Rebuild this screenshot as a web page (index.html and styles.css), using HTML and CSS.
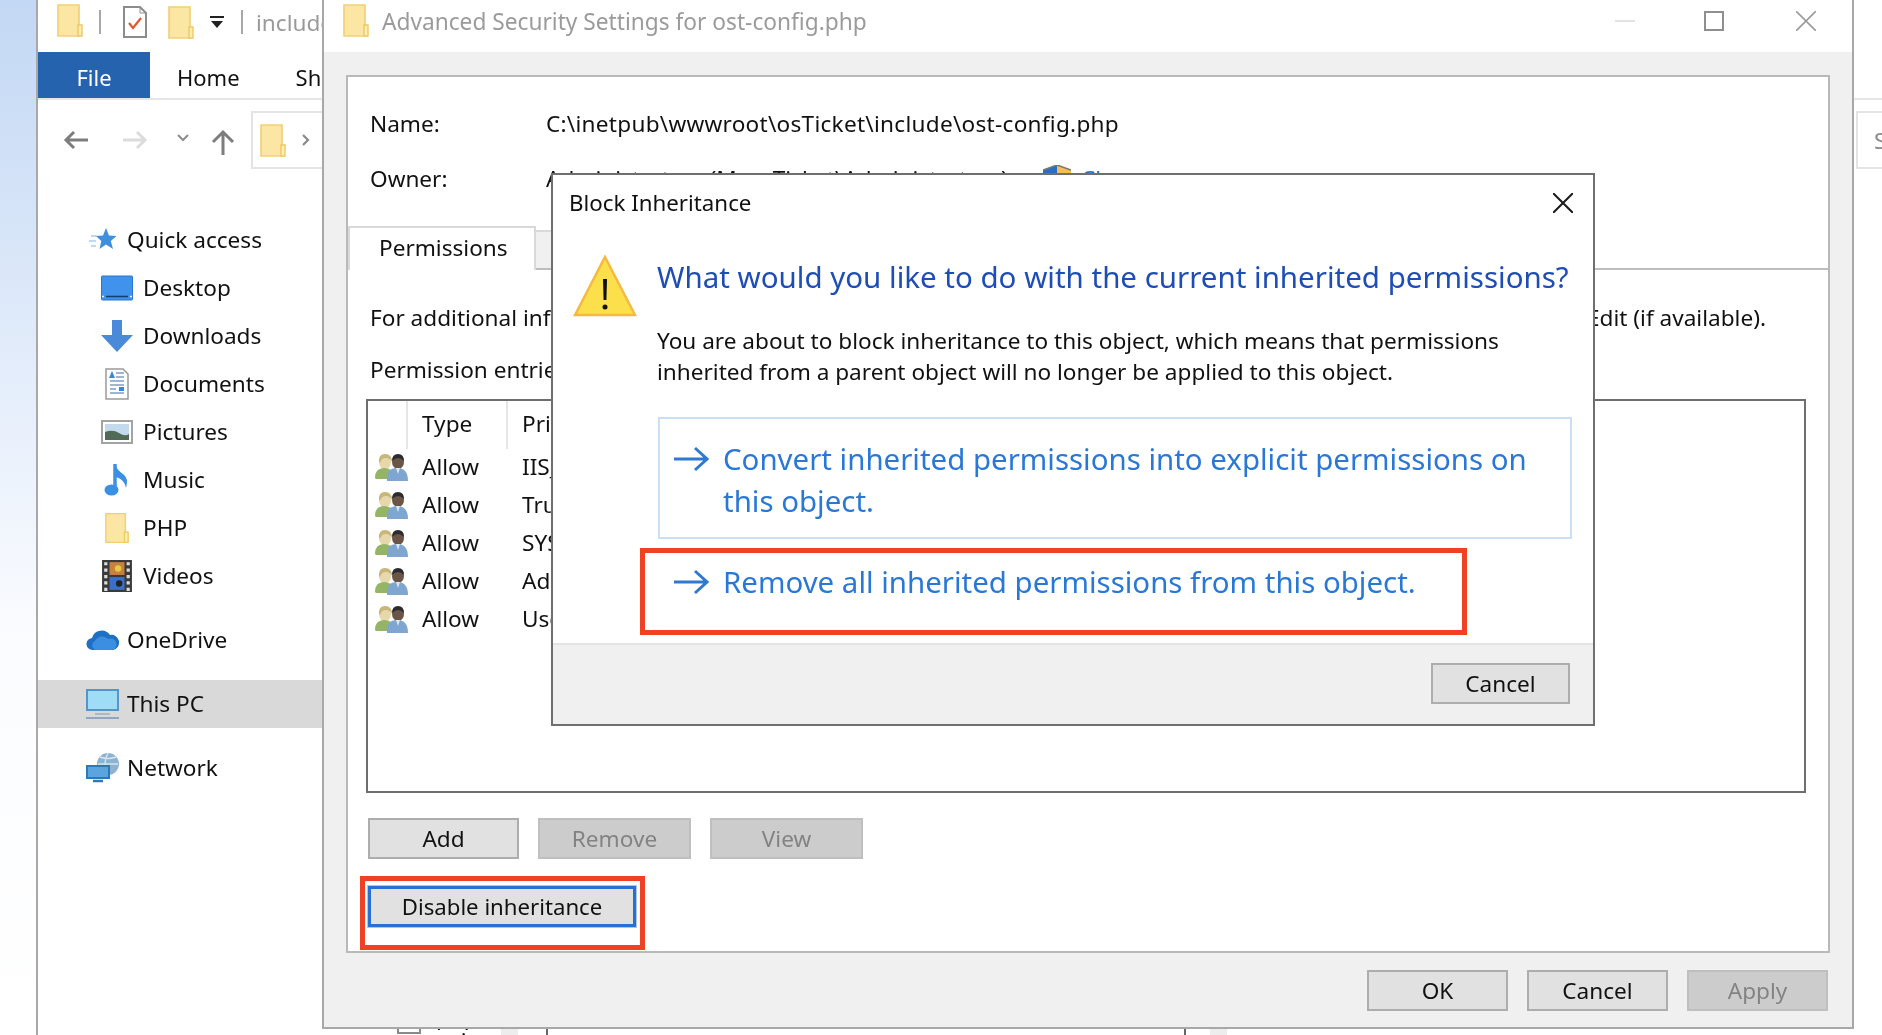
FILE: index.html
```html
<!DOCTYPE html>
<html lang="en">
<head>
<meta charset="utf-8">
<title>Block Inheritance</title>
<link rel="stylesheet" href="styles.css">
</head>
<body>
<svg class="sprite" xmlns="http://www.w3.org/2000/svg">
  <symbol id="folder" viewBox="0 0 26 33"><path d="M1 1h21v31H1z" fill="#fbe6a4" stroke="#f2cf75" stroke-width="1.6"/><path d="M21 21h4v11h-4z" fill="#fdeeb8" stroke="#f0c860" stroke-width="1.4"/></symbol>
  <symbol id="people" viewBox="0 0 33 27"><ellipse cx="10" cy="8" rx="6" ry="7.500" fill="#e6d8aa"/><path d="M4 9q-1-9 6-9t7 8q-2-4-6-4t-5 3z" fill="#c8b77c"/><path d="M0 24q0-10 9-10 8 0 10 7v4H1z" fill="#94b565"/><ellipse cx="23" cy="8" rx="6" ry="7" fill="#6a5546"/><path d="M17 7q0-7 6-7t6 7q-3-3-6-3t-6 3z" fill="#2b2b30"/><path d="M12 27q-1-13 10-13 11 0 11 13z" fill="#7fa6d0"/><path d="M21 14l2 6 2-6z" fill="#dbe8f4"/></symbol>
  <symbol id="arrow" viewBox="0 0 36 26"><path d="M1 13h33M22 2l12 11-12 11" fill="none" stroke="#2f79d2" stroke-width="3"/></symbol>
</svg>
<main class="desktop">
  <section class="explorer">
    <header class="qat">
      <svg class="ic-folder ic-folder-1"><use href="#folder"/></svg>
      <span class="qat-sep"></span>
      <svg class="ic-check" viewBox="0 0 24 32"><path d="M1 1h16l6 6v24H1z" fill="#fff" stroke="#8c8c8c" stroke-width="2"/><path d="M17 1v6h6" fill="none" stroke="#8c8c8c"/><path d="M6 17l4 5 8-10" fill="none" stroke="#e0582d" stroke-width="2.2"/></svg>
      <svg class="ic-folder ic-folder-2"><use href="#folder"/></svg>
      <svg class="ic-drop" viewBox="0 0 14 14"><path d="M0 1h14v2H0zM1 6h12l-6 7z" fill="#222"/></svg>
      <span class="qat-sep qat-sep-2"></span>
      <span class="qat-path">include</span>
    </header>
    <nav class="ribbon">
      <span class="rib-file">File</span>
      <span class="rib-tab">Home</span>
      <span class="rib-tab rib-share">Share</span>
    </nav>
    <div class="addrbar">
      <svg class="nav-back" viewBox="0 0 26 20"><path d="M25 10H3M11 2l-8 8 8 8" fill="none" stroke="#7d7d7d" stroke-width="3"/></svg>
      <svg class="nav-fwd" viewBox="0 0 26 20"><path d="M1 10h22M15 2l8 8-8 8" fill="none" stroke="#dcdcdc" stroke-width="3"/></svg>
      <svg class="nav-chev" viewBox="0 0 12 8"><path d="M1 1l5 5 5-5" fill="none" stroke="#8d8d8d" stroke-width="2"/></svg>
      <svg class="nav-up" viewBox="0 0 24 26"><path d="M12 26V3M2 13L12 3l10 10" fill="none" stroke="#7d7d7d" stroke-width="3"/></svg>
      <div class="addr">
        <svg class="ic-folder"><use href="#folder"/></svg>
        <svg class="addr-chev" viewBox="0 0 8 12"><path d="M1 1l5 5-5 5" fill="none" stroke="#8a8a8a" stroke-width="2.2"/></svg>
      </div>
      <div class="search"><span>S</span></div>
    </div>
    <div class="ex-body">
      <ul class="navpane">
        <li class="nav-item nav-top">
          <svg class="nic" viewBox="-3 -4 33 32"><path d="M17 0l3 7.500 7.500 .5-5.700 5 2.200 8-7-4.500-6.500 4.500 1.800-8-5.300-5 7-.5z" fill="#3f8fdc"/><path d="M2 8h6M0 13h7M2 18h5" stroke="#a9cdf0" stroke-width="1.500"/></svg>
          Quick access
        </li>
        <li class="nav-item nav-sub">
          <svg class="nic" viewBox="0 0 32 25"><rect x="0.500" y="0.500" width="31" height="24" rx="1" fill="#3f93ec" stroke="#2a76c8"/><path d="M5 21h22" stroke="#123e74" stroke-width="1.500"/><path d="M1 21h2M29 21h2" stroke="#dff" stroke-width="1.500"/></svg>
          Desktop
        </li>
        <li class="nav-item nav-sub">
          <svg class="nic" viewBox="0 0 32 32"><path d="M11 0h10v15h11L16 32 0 15h11z" fill="#4a8ad8"/></svg>
          Downloads
        </li>
        <li class="nav-item nav-sub">
          <svg class="nic" viewBox="0 0 32 32"><path d="M5 1h17l5 5v25H5z" fill="#fff" stroke="#9a9a9a" stroke-width="1.500"/><path d="M15 5h8M15 9h8M9 13h14M9 17h14M9 21h6M9 25h14" stroke="#7f9fc4" stroke-width="1.500"/><path d="M11 3l3 7H8zM18 19h5v4h-5z" fill="#3b86d6"/></svg>
          Documents
        </li>
        <li class="nav-item nav-sub">
          <svg class="nic" viewBox="0 0 32 24"><rect x="1" y="1" width="30" height="22" fill="#fff" stroke="#a3a3a3" stroke-width="2"/><rect x="4" y="4" width="24" height="16" fill="#c2d9ee"/><path d="M4 12q8-3 14 1t10 1v6H4z" fill="#4f6b57"/></svg>
          Pictures
        </li>
        <li class="nav-item nav-sub">
          <svg class="nic" viewBox="0 0 32 32"><path d="M14 0v25" stroke="#3a90e2" stroke-width="3.500"/><path d="M14 0q2 6 8 10t3 14q-1-8-10-11z" fill="#3a90e2"/><ellipse cx="10.500" cy="26" rx="7" ry="5.500" fill="#3a90e2"/></svg>
          Music
        </li>
        <li class="nav-item nav-sub">
          <svg class="nic nic-folder"><use href="#folder"/></svg>
          PHP
        </li>
        <li class="nav-item nav-sub">
          <svg class="nic" viewBox="0 0 28 30"><rect width="28" height="30" fill="#3a3a3a"/><path d="M2 2h3v3H2zM2 8h3v3H2zM2 14h3v3H2zM2 20h3v3H2zM2 26h3v3H2zM23 2h3v3h-3zM23 8h3v3h-3zM23 14h3v3h-3zM23 20h3v3h-3zM23 26h3v3h-3z" fill="#ddd"/><rect x="7" y="2" width="14" height="12" fill="#c9813c"/><rect x="7" y="16" width="14" height="12" fill="#3c6fc9"/><circle cx="15" cy="8" r="3" fill="#e8c84a"/><circle cx="16" cy="22" r="3" fill="#222"/></svg>
          Videos
        </li>
        <li class="nav-item nav-top nav-gap">
          <svg class="nic" viewBox="0 0 33 24"><path d="M7 22a6 6 0 0 1-1-12 10 10 0 0 1 18-3 7 7 0 0 1 3 15z" fill="#1f6fc4"/><path d="M9 22a5 5 0 0 1 0-9 8 8 0 0 1 13-2 6 6 0 0 1 5 11z" fill="#3b8ee0"/></svg>
          OneDrive
        </li>
        <li class="nav-item nav-top nav-gap nav-selected">
          <svg class="nic" viewBox="0 0 33 30"><rect x="1" y="1" width="31" height="20" fill="#9fdcf6" stroke="#5795c8" stroke-width="2"/><path d="M9 25h15" stroke="#aab9c6" stroke-width="2"/><path d="M0 29h33" stroke="#8fa8c0" stroke-width="2"/></svg>
          This PC
        </li>
        <li class="nav-item nav-top nav-gap">
          <svg class="nic" viewBox="0 0 33 30"><circle cx="22" cy="11" r="11" fill="#8db3d0"/><path d="M14 4q8 3 16 0M12 11h20M22 0q-6 11 0 22" stroke="#d5e5f0" stroke-width="1.500" fill="none"/><rect x="1" y="13" width="22" height="12" fill="#5ba5de" stroke="#2f78b8" stroke-width="2"/><path d="M7 28h10" stroke="#2f78b8" stroke-width="2.500"/></svg>
          Network
        </li>
      </ul>
      <div class="filelist">
        <div class="file-row">
          <span class="file-check"></span>
          <span class="file-name">php-cgi</span>
          <span class="file-thumb"></span>
          <span class="file-rule"></span>
          <span class="file-fill"></span>
          <span class="file-rule"></span>
          <span class="file-thumb file-thumb-2"></span>
          <span class="file-type">PHP File</span>
        </div>
      </div>
    </div>
  </section>

  <section class="security">
    <header class="sec-title">
      <svg class="ic-folder"><use href="#folder"/></svg>
      <h1 class="sec-heading">Advanced Security Settings for ost-config.php</h1>
      <svg class="win-min" viewBox="0 0 20 2"><path d="M0 1h20" stroke="#e2e2e2" stroke-width="2"/></svg>
      <svg class="win-max" viewBox="0 0 20 20"><rect x="1" y="1" width="18" height="18" fill="none" stroke="#8f8f8f" stroke-width="2"/></svg>
      <svg class="win-close" viewBox="0 0 20 20"><path d="M0 0l20 20M20 0L0 20" stroke="#9a9a9a" stroke-width="1.600"/></svg>
    </header>
    <div class="panel">
      <dl class="info">
        <dt>Name:</dt>
        <dd class="path">C:\inetpub\wwwroot\osTicket\include\ost-config.php</dd>
        <dt>Owner:</dt>
        <dd class="owner">
          <span class="owner-name">Administrators (MyosTicket\Administrators)</span>
          <svg class="shield" viewBox="0 0 28 32"><path d="M14 0l14 5v12q0 10-14 15Q0 27 0 17V5z" fill="#f2c14e"/><path d="M14 0L0 5v12h14z" fill="#2b6fc4"/><path d="M14 17v15q14-5 14-15z" fill="#2b6fc4"/><path d="M14 0L0 5M14 0l14 5" stroke="#777" stroke-width="1.500"/></svg>
          <span class="change">Change</span>
        </dd>
      </dl>
      <div class="tabs">
        <span class="tab tab-on">Permissions</span>
        <span class="tab">Auditing</span>
      </div>
      <div class="perm">
        <p class="perm-note"><span class="note-left">For additional information, double-click a permission entry.</span><span class="note-right">To modify a permission entry, select the entry and click Edit (if available).</span></p>
        <p class="perm-label">Permission entries:</p>
        <div class="list">
          <div class="list-head">
            <span class="col-icon"></span>
            <span class="col-type">Type</span>
            <span class="col-name">Principal</span>
          </div>
          <div class="list-row"><svg class="ic-people"><use href="#people"/></svg><span class="col-type">Allow</span><span class="col-name">IIS_IUSRS</span></div>
          <div class="list-row"><svg class="ic-people"><use href="#people"/></svg><span class="col-type">Allow</span><span class="col-name">TrustedInstaller</span></div>
          <div class="list-row"><svg class="ic-people"><use href="#people"/></svg><span class="col-type">Allow</span><span class="col-name">SYSTEM</span></div>
          <div class="list-row"><svg class="ic-people"><use href="#people"/></svg><span class="col-type">Allow</span><span class="col-name">Administrators</span></div>
          <div class="list-row"><svg class="ic-people"><use href="#people"/></svg><span class="col-type">Allow</span><span class="col-name">Users</span></div>
        </div>
        <div class="perm-actions">
          <button class="btn btn-add">Add</button>
          <button class="btn btn-small btn-off">Remove</button>
          <button class="btn btn-small btn-off">View</button>
        </div>
        <button class="btn btn-focus">Disable inheritance</button>
      </div>
    </div>
    <footer class="sec-foot">
      <button class="btn btn-foot">OK</button>
      <button class="btn btn-foot">Cancel</button>
      <button class="btn btn-foot btn-off">Apply</button>
    </footer>
  </section>

  <section class="dialog">
    <header class="dlg-title">
      <span>Block Inheritance</span>
      <svg class="dlg-close" viewBox="0 0 20 20"><path d="M0 0l20 20M20 0L0 20" stroke="#1b1b1b" stroke-width="2"/></svg>
    </header>
    <div class="dlg-body">
      <svg class="warn" viewBox="0 0 64 62"><path d="M32 2l30 58H2z" fill="#fbdf4b" stroke="#f6b93f" stroke-width="2.500"/><path d="M30 24h4l-.6 21h-2.800z" fill="#111"/><circle cx="32" cy="52" r="2.500" fill="#111"/></svg>
      <div class="dlg-main">
        <h2 class="dlg-q">What would you like to do with the current inherited permissions?</h2>
        <p class="dlg-text">You are about to block inheritance to this object, which means that permissions inherited from a parent object will no longer be applied to this object.</p>
        <a class="cmd cmd-hover"><svg class="cmd-arrow"><use href="#arrow"/></svg><span>Convert inherited permissions into explicit permissions on this object.</span></a>
        <a class="cmd cmd-plain"><svg class="cmd-arrow"><use href="#arrow"/></svg><span>Remove all inherited permissions from this object.</span></a>
      </div>
    </div>
    <footer class="dlg-foot"><button class="btn btn-foot btn-dlg">Cancel</button></footer>
  </section>

  <div class="callout callout-disable"></div>
  <div class="callout callout-remove"></div>
</main>
</body>
</html>
```

FILE: styles.css
```css
* { box-sizing: border-box; }
html, body { margin: 0; height: 100%; }
body { font-family: "Noto Sans", "Open Sans", sans-serif; font-size: 22.6px; color: #111; overflow: hidden; }
.sprite { width: 0; height: 0; position: absolute; }
ul, dl, dd, dt, p, h1, h2 { margin: 0; padding: 0; font-weight: 400; }
.desktop { position: relative; width: 1882px; height: 1035px; overflow: hidden; background: linear-gradient(180deg, #c3d8f4 0, #dfeafa 320px, #fbfcff 640px, #fff 1035px); }

/* Explorer */
.explorer { position: absolute; left: 36px; top: 0; width: 1846px; height: 1035px; background: #fff; border-left: 2px solid #a8a8a8; display: flex; flex-direction: column; filter: blur(.4px); }
.qat { height: 52px; display: flex; align-items: center; padding: 0 0 8px 19px; flex: none; }
.ic-folder { width: 26px; height: 33px; flex: none; }
.ic-folder-1 { margin-bottom: 4px; }
.qat-sep { width: 2px; height: 24px; background: #a8a8a8; margin-left: 16px; }
.ic-check { width: 24px; height: 32px; margin-left: 22px; }
.ic-folder-2 { margin-left: 21px; }
.ic-drop { width: 14px; height: 14px; margin-left: 16px; }
.qat-sep-2 { margin-left: 17px; }
.qat-path { margin-left: 13px; color: #9a9a9a; }
.ribbon { height: 48px; flex: none; display: flex; border-bottom: 2px solid #e6e6e6; align-items: stretch; font-size: 22px; }
.rib-file { width: 112px; background: #2563ae; color: #fff; display: flex; align-items: center; justify-content: center; padding-top: 3px; }
.rib-tab { margin-left: 27px; display: flex; align-items: center; padding-top: 3px; }
.rib-share { margin-left: 56px; }
.addrbar { height: 70px; flex: none; padding-top: 11px; display: flex; align-items: flex-start; }
.nav-back { width: 26px; height: 20px; margin: 19px 0 0 25px; }
.nav-fwd { width: 26px; height: 20px; margin: 19px 0 0 33px; }
.nav-chev { width: 12px; height: 8px; margin: 23px 0 0 29px; }
.nav-up { width: 24px; height: 26px; margin: 18px 0 0 22px; }
.addr { flex: 1; height: 58px; margin-left: 16px; border: 2px solid #e4e4e4; display: flex; align-items: center; padding-left: 7px; }
.addr-chev { width: 8px; height: 12px; margin-left: 16px; }
.search { width: 26px; height: 58px; margin-left: 30px; flex: none; border: 2px solid #e4e4e4; border-right: 0; display: flex; align-items: center; padding-left: 16px; color: #8a8a8a; overflow: hidden; }
.ex-body { flex: 1; display: flex; min-height: 0; }
.navpane { list-style: none; width: 284px; flex: none; padding-top: 46px; }
.nav-item { height: 48px; display: flex; align-items: center; padding-bottom: 2px; }
.nav-top { padding-left: 48px; }
.nav-sub { padding-left: 0; }
.nav-gap { margin-top: 16px; }
.nav-selected { background: #d9d9d9; }
.nic { width: 33px; height: 32px; flex: none; margin: 2px 8px 0 0; }
.nav-sub .nic { margin-left: 63px; margin-right: 10px; width: 32px; }
.nic-folder { transform: scale(.96); }
.filelist { flex: 1; display: flex; align-items: flex-end; min-width: 0; }
.file-row { height: 30px; width: 100%; display: flex; align-items: flex-end; }
.file-check { width: 24px; height: 24px; margin: 0 0 1px 75px; border: 2px solid #8a8a8a; flex: none; }
.file-name { width: 65px; margin-left: 15px; height: 30px; line-height: 24px; overflow: hidden; flex: none; }
.file-thumb { width: 17px; height: 30px; background: #ededed; flex: none; }
.file-rule { width: 2px; height: 30px; background: #666; flex: none; }
.file-row .file-rule { margin-left: 28px; }
.file-fill { width: 608px; flex: none; }
.file-thumb-2 { margin-left: 24px; }
.file-type { margin-left: 4px; height: 30px; line-height: 20px; color: #777; overflow: hidden; }

/* Security window */
.security { position: absolute; left: 322px; top: 0; width: 1532px; height: 1029px; background: #f0f0f0; border: 2px solid #a8a8a8; border-top: 0; display: flex; flex-direction: column; filter: blur(.4px); }
.sec-title { height: 52px; flex: none; background: #fff; display: flex; align-items: center; padding: 0 0 11px 19px; }
.sec-heading { font-size: 22.7px; color: #9b9b9b; margin: 2px 0 0 13px; flex: 1; white-space: nowrap; }
.win-min { width: 20px; height: 2px; margin-right: 69px; }
.win-max { width: 20px; height: 20px; margin-right: 72px; }
.win-close { width: 20px; height: 20px; margin-right: 36px; }
.panel { margin: 23px 22px 0; height: 878px; flex: none; background: #fff; border: 2px solid #b9b9b9; display: flex; flex-direction: column; }
.info { height: 149px; flex: none; padding: 24px 0 0 22px; display: grid; grid-template-columns: 176px 1fr; row-gap: 11px; grid-auto-rows: 44px; align-items: center; }
.path { letter-spacing: .26px; }
.owner { display: flex; align-items: center; }
.owner-name { width: 497px; flex: none; white-space: nowrap; overflow: hidden; }
.shield { width: 28px; height: 32px; margin-top: 6px; }
.change { margin-left: 10px; color: #2472cc; }
.tabs { height: 44px; flex: none; display: flex; border-bottom: 2px solid #bdbdbd; }
.tab { width: 188px; display: flex; align-items: center; padding: 0 0 4px 29px; background: #f0f0f0; border: 2px solid #d9d9d9; border-left: 0; border-bottom: 0; margin-top: 4px; }
.tab-on { background: #fff; margin: 0 0 -2px; height: 44px; border-top: 2px solid #d9d9d9; border-left: 2px solid #d9d9d9; }
.perm { flex: 1; padding: 25px 22px 0 18px; min-height: 0; }
.perm-note { height: 44px; width: 1400px; padding-left: 4px; display: flex; align-items: center; white-space: nowrap; }
.note-left { flex: 1; min-width: 0; overflow: hidden; }
.note-right { flex: none; }
.perm-label { height: 44px; margin-top: 8px; padding-left: 4px; display: flex; align-items: center; }
.list { height: 394px; margin-top: 8px; border: 2px solid #6e6e6e; }
.list-head { height: 48px; display: flex; align-items: center; }
.col-icon { width: 40px; height: 100%; border-right: 2px solid #e6e6e6; }
.col-type { width: 100px; padding: 0 0 2px 14px; flex: none; }
.list-head .col-type { height: 100%; display: flex; align-items: center; padding-bottom: 4px; border-right: 2px solid #e6e6e6; }
.col-name { padding: 0 0 2px 14px; }
.list-head .col-name { padding-bottom: 4px; }
.list-row { height: 37.8px; display: flex; align-items: center; }
.ic-people { width: 33px; height: 27px; margin: 0 0 0 7px; flex: none; }
.perm-actions { display: flex; gap: 19px; margin: 25px 0 0 2px; }
.btn { font: inherit; color: #111; background: #e1e1e1; border: 2px solid #adadad; border-radius: 0; padding: 0; display: flex; align-items: center; justify-content: center; }
.btn-small { width: 153px; height: 41px; }
.btn-add { width: 151px; height: 41px; }
.btn-off { background: #cccccc; border-color: #bfbfbf; color: #838383; }
.btn-focus { width: 268px; height: 41px; margin: 27px 0 0 2px; font-size: 22.2px; border: 3px solid #2a70d2; outline: 1px solid #a9c8ee; }
.sec-foot { flex: 1; display: flex; justify-content: flex-end; gap: 19px; padding: 17px 24px 0 0; }
.btn-foot { width: 141px; height: 41px; }

/* Dialog */
.dialog { position: absolute; left: 551px; top: 173px; width: 1044px; height: 553px; background: #fff; border: 2px solid #6f6f6f; display: flex; flex-direction: column; filter: blur(.35px); }
.dlg-title { height: 60px; flex: none; display: flex; align-items: center; justify-content: space-between; padding: 0 20px 5px 16px; font-size: 22.3px; }
.dlg-close { width: 20px; height: 20px; }
.dlg-body { flex: 1; display: flex; min-height: 0; padding-left: 20px; }
.warn { width: 64px; height: 62px; margin-top: 20px; flex: none; }
.dlg-main { width: 930px; margin-left: 20px; }
.dlg-q { font-size: 29.5px; line-height: 36px; margin-top: 24px; color: #1d4db5; white-space: nowrap; }
.dlg-text { width: 900px; line-height: 30.5px; margin-top: 31px; }
.cmd { display: flex; align-items: flex-start; color: #2a78d6; font-size: 29.45px; line-height: 42px; }
.cmd-arrow { width: 36px; height: 26px; margin: 8px 14px 0 0; flex: none; }
.cmd-hover { margin: 30px 0 0 1px; width: 914px; height: 122px; padding: 19px 28px 0 13px; border: 2px solid #c9dff5; }
.cmd-plain { margin-left: 1px; padding: 22px 15px 0; }
.dlg-foot { height: 81px; flex: none; background: #f0f0f0; border-top: 2px solid #e3e3e3; display: flex; justify-content: flex-end; padding: 18px 23px 0 0; }
.btn-dlg { width: 139px; }

/* Annotation callouts */
.callout { position: absolute; border: 5px solid #ef4123; }
.callout-disable { left: 360px; top: 876px; width: 285px; height: 74px; }
.callout-remove { left: 640px; top: 548px; width: 827px; height: 87px; }
```
